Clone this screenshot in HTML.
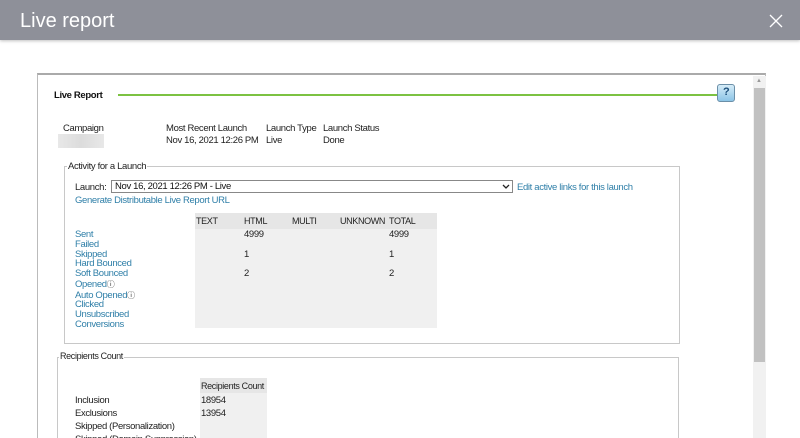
<!DOCTYPE html>
<html style="overflow:hidden"><head><style>
html,body{margin:0;width:800px;height:438px;overflow:hidden}
body{background:#fff;font-family:"Liberation Sans",sans-serif;position:relative}
.a{position:absolute;white-space:nowrap;font-size:9.5px;letter-spacing:-0.35px;color:#222;line-height:11px}
.l{color:#2f7fa8}
</style></head><body>
<div style="position:absolute;left:0;top:0;width:800px;height:40px;background:#8e9099;box-shadow:0 1px 3px rgba(0,0,0,.25)"></div>
<div class="a" style="left:20px;top:9px;font-size:20px;line-height:24px;color:#fff;letter-spacing:0">Live report</div>
<svg style="position:absolute;left:769px;top:14px" width="14" height="14"><path d="M1 1L13 13M13 1L1 13" stroke="#fff" stroke-width="1.3"/></svg>
<div style="position:absolute;left:37px;top:73px;width:729px;height:365px;border-left:1px solid #bbb;border-right:1px solid #bbb;border-top:2px solid #aaa;box-sizing:border-box"></div>
<div style="position:absolute;left:753px;top:76px;width:13px;height:362px;background:#f1f1f1"></div>
<div style="position:absolute;left:754px;top:88px;width:11px;height:274px;background:#c1c1c1"></div>
<div class="a" style="left:756px;top:76px;font-size:6px;color:#999">▲</div>
<div class="a" style="left:54px;top:90px;font-weight:bold;color:#111">Live Report</div>
<div style="position:absolute;left:118px;top:94px;width:600px;height:2px;background:#7cc242"></div>
<div style="position:absolute;left:717px;top:84px;width:18px;height:18px;border:1px solid #6b8fa8;border-radius:3px;background:linear-gradient(#d6ecf8,#8cc4e6);box-sizing:border-box"></div>
<div class="a" style="left:723px;top:87px;font-weight:bold;color:#1a4e7a;font-size:11px">?</div>
<div class="a" style="left:63px;top:123px">Campaign</div>
<div style="position:absolute;left:58px;top:134px;width:46px;height:14px;background:linear-gradient(90deg,#e8e8e8,#dcdcdc,#e8e8e8)"></div>
<div class="a" style="left:166px;top:123px">Most Recent Launch</div>
<div class="a" style="left:166px;top:135px">Nov 16, 2021 12:26 PM</div>
<div class="a" style="left:266px;top:123px">Launch Type</div>
<div class="a" style="left:266px;top:135px">Live</div>
<div class="a" style="left:323px;top:123px">Launch Status</div>
<div class="a" style="left:323px;top:135px">Done</div>
<div style="position:absolute;left:64px;top:166px;width:614px;height:176px;border:1px solid #c8c8c8"></div>
<div class="a" style="left:67px;top:161px;background:#fff;padding:0 1px">Activity for a Launch</div>
<div class="a" style="left:75px;top:182px">Launch:</div>
<div style="position:absolute;left:111px;top:180px;width:402px;height:13px;border:1px solid #888;box-sizing:border-box"></div>
<div class="a" style="left:115px;top:181px;color:#111">Nov 16, 2021 12:26 PM - Live</div>
<svg style="position:absolute;left:502px;top:184px" width="8" height="6"><path d="M1 1L4 4L7 1" stroke="#222" stroke-width="1.3" fill="none"/></svg>
<div class="a l" style="left:517px;top:182px">Edit active links for this launch</div>
<div class="a l" style="left:75px;top:195px">Generate Distributable Live Report URL</div>
<div style="position:absolute;left:195px;top:213px;width:242px;height:115px;background:#f0f0f0"></div>
<div style="position:absolute;left:195px;top:213px;width:242px;height:16px;background:#e6e6e6"></div>
<div class="a" style="left:196px;top:216px;font-size:9px">TEXT</div>
<div class="a" style="left:244px;top:216px;font-size:9px">HTML</div>
<div class="a" style="left:292px;top:216px;font-size:9px">MULTI</div>
<div class="a" style="left:340px;top:216px;font-size:9px">UNKNOWN</div>
<div class="a" style="left:389px;top:216px;font-size:9px">TOTAL</div>
<div class="a" style="left:244px;top:229px">4999</div><div class="a" style="left:389px;top:229px">4999</div>
<div class="a" style="left:244px;top:249px">1</div><div class="a" style="left:389px;top:249px">1</div>
<div class="a" style="left:244px;top:268px">2</div><div class="a" style="left:389px;top:268px">2</div>
<div class="a l" style="left:75px;top:229px">Sent</div>
<div class="a l" style="left:75px;top:239px">Failed</div>
<div class="a l" style="left:75px;top:249px">Skipped</div>
<div class="a l" style="left:75px;top:258px">Hard Bounced</div>
<div class="a l" style="left:75px;top:268px">Soft Bounced</div>
<div class="a l" style="left:75px;top:279px">Opened<span style="color:#333;font-size:8px">ⓘ</span></div>
<div class="a l" style="left:75px;top:290px">Auto Opened<span style="color:#333;font-size:8px">ⓘ</span></div>
<div class="a l" style="left:75px;top:299px">Clicked</div>
<div class="a l" style="left:75px;top:309px">Unsubscribed</div>
<div class="a l" style="left:75px;top:319px">Conversions</div>
<div style="position:absolute;left:57px;top:357px;width:620px;height:90px;border:1px solid #c8c8c8"></div>
<div class="a" style="left:59px;top:351px;background:#fff;padding:0 1px;font-size:9px">Recipients Count</div>
<div style="position:absolute;left:200px;top:378px;width:67px;height:70px;background:#f0f0f0"></div>
<div style="position:absolute;left:200px;top:378px;width:67px;height:15px;background:#e6e6e6"></div>
<div class="a" style="left:201px;top:381px;font-size:9px">Recipients Count</div>
<div class="a" style="left:75px;top:395px">Inclusion</div><div class="a" style="left:201px;top:395px">18954</div>
<div class="a" style="left:75px;top:408px">Exclusions</div><div class="a" style="left:201px;top:408px">13954</div>
<div class="a" style="left:75px;top:421px">Skipped (Personalization)</div>
<div class="a" style="left:75px;top:434px">Skipped (Domain Suppression)</div>
</body></html>
